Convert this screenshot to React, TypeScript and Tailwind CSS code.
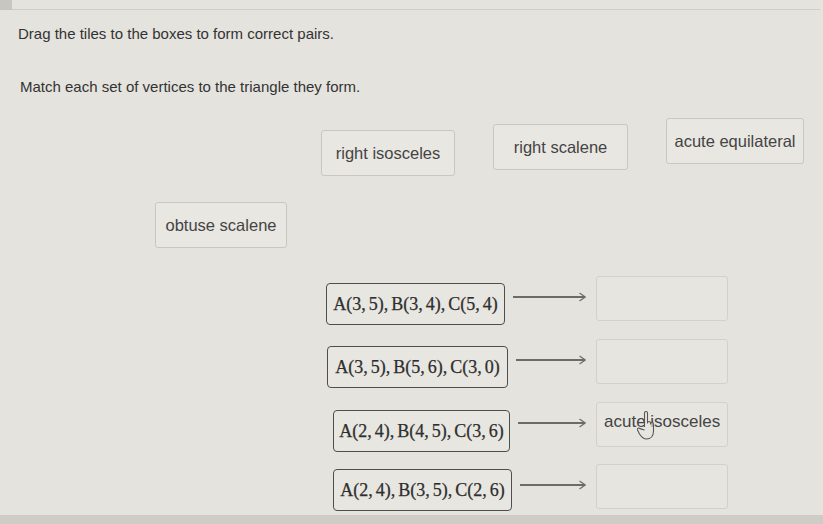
import React from 'react'

type Pair = {
  vertices: string
  answer?: string
  left: string
  boxTop: string
  rowTop: string
}

const tiles = [
  { label: 'right isosceles', className: 'mt-[12px] w-[134px]' },
  { label: 'right scalene', className: 'mt-[6px] w-[135px]' },
  { label: 'acute equilateral', className: 'mt-0 w-[138px]' },
]

const pairs: Pair[] = [
  { vertices: 'A(3, 5), B(3, 4), C(5, 4)', left: 'ml-[326px] w-[179px]', boxTop: 'mt-[7px]', rowTop: 'mt-0' },
  { vertices: 'A(3, 5), B(5, 6), C(3, 0)', left: 'ml-[327px] w-[181px]', boxTop: 'mt-[7px]', rowTop: 'mt-[14px]' },
  {
    vertices: 'A(2, 4), B(4, 5), C(3, 6)',
    answer: 'acute isosceles',
    left: 'ml-[333px] w-[177px]',
    boxTop: 'mt-[8px]',
    rowTop: 'mt-[14px]',
  },
  { vertices: 'A(2, 4), B(3, 5), C(2, 6)', left: 'ml-[333px] w-[179px]', boxTop: 'mt-[5px]', rowTop: 'mt-[12px]' },
]

const Arrow: React.FC = () => (
  <div className="ml-[8px] mr-[10px] mt-[16px] flex h-[10px] flex-1 items-center">
    <div className="h-[1.2px] flex-1 bg-[#6b6b6b]" />
    <svg width="7" height="10" viewBox="0 0 7 10" className="-ml-[6px] shrink-0">
      <polyline points="0.5,1 6.3,5 0.5,9" fill="none" stroke="#6b6b6b" strokeWidth="1.2" />
    </svg>
  </div>
)

// grab cursor hovering over the dropped tile
const HandCursor: React.FC = () => (
  <svg
    width="18"
    height="32"
    viewBox="0 0 18 32"
    className="absolute left-[40px] top-[6px]"
  >
    <path
      d="M7.5 18 V4 a1.5 1.5 0 0 1 3 0 V14 a1.5 1.5 0 0 1 3 0 V15 a1.5 1.5 0 0 1 3 0 V22 c0 5 -3 8 -7 8 c-3 0 -5 -2 -7 -5 l-2 -4 a1.4 1.4 0 0 1 2.4 -1.4 L7.5 21"
      fill="#e7e5e0"
      fillOpacity="0.6"
      stroke="#555"
      strokeWidth="1.1"
      strokeLinejoin="round"
    />
  </svg>
)

const App: React.FC = () => {
  return (
    <div className="relative h-[524px] w-[823px] overflow-hidden bg-[#e5e3de] font-['Liberation_Sans',Arial,sans-serif] text-[#3a3a3a]">
      <div className="flex h-[10px] items-end">
        <div className="h-[10px] w-[12px] bg-[#c8c6c1]" />
        <div className="h-px w-[808px] bg-[#cfcdc8]" />
      </div>

      <p className="ml-[18px] mt-[13px] text-[15px] text-[#333]">
        Drag the tiles to the boxes to form correct pairs.
      </p>
      <p className="ml-[20px] mt-[30px] text-[15px] text-[#333]">
        Match each set of vertices to the triangle they form.
      </p>

      <div className="ml-[321px] mt-[20px] flex items-start gap-[38px]">
        {tiles.map((tile) => (
          <div
            key={tile.label}
            className={`${tile.className} flex h-[46px] items-center justify-center rounded-[3px] border border-[#c9c7c2] bg-[#e9e7e2] text-[16.5px] text-[#444]`}
          >
            {tile.label}
          </div>
        ))}
      </div>

      <div className="ml-[155px] mt-[26px] flex h-[46px] w-[132px] items-center justify-center rounded-[3px] border border-[#c9c7c2] bg-[#e9e7e2] text-[16.5px] text-[#444]">
        obtuse scalene
      </div>

      <div className="mt-[28px] flex flex-col">
        {pairs.map((pair) => (
          <div key={pair.vertices} className={`${pair.rowTop} flex w-[728px] items-start`}>
            <div
              className={`${pair.left} ${pair.boxTop} flex h-[42px] shrink-0 items-center justify-center rounded-[4px] border-[1.5px] border-[#4e4e4e] bg-[#e8e6e1] font-['Liberation_Serif','Times_New_Roman',serif] text-[18px] text-[#2e2e2e] [-webkit-text-stroke:0.25px_#2e2e2e] [word-spacing:-1.5px]`}
            >
              {pair.vertices}
            </div>
            <Arrow />
            <div className="relative flex h-[45px] w-[132px] shrink-0 items-center rounded-[3px] border border-[#d3d1cc] bg-[#e7e5e0] pl-[7px] text-[17px] text-[#444]">
              {pair.answer && (
                <>
                  <span className="-mt-[6px]">{pair.answer}</span>
                  <HandCursor />
                </>
              )}
            </div>
          </div>
        ))}
      </div>

      <div className="absolute bottom-0 left-0 h-[9px] w-full bg-[#cfccc5]" />
    </div>
  )
}

export default App
